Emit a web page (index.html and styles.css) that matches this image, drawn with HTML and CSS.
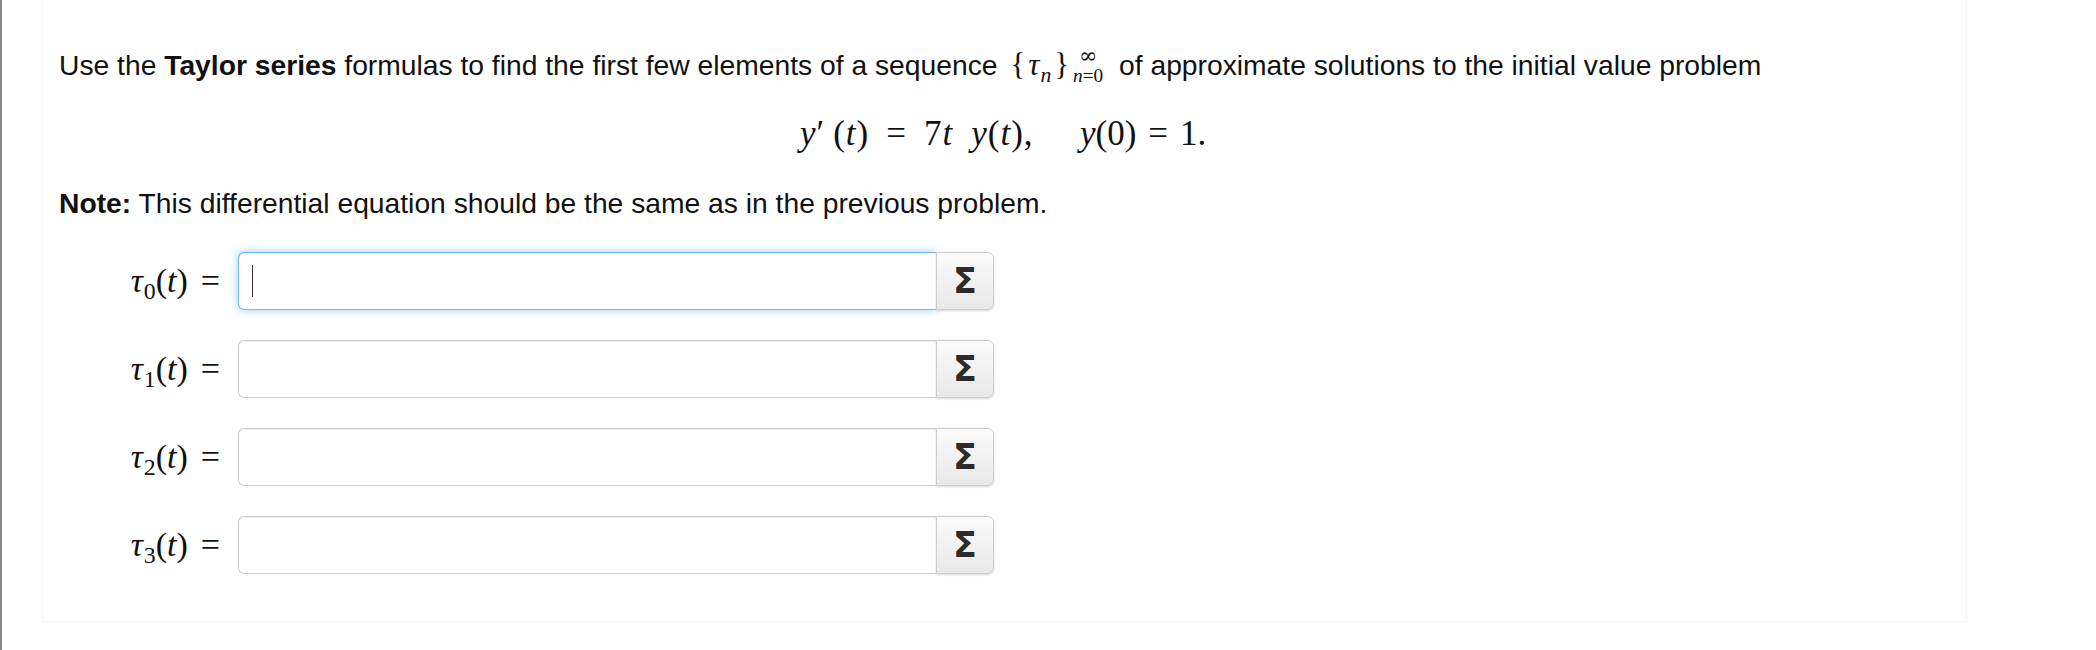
FILE: index.html
```html
<!DOCTYPE html>
<html>
<head>
<meta charset="utf-8">
<link rel="stylesheet" href="styles.css">
</head>
<body>
<div class="page">
  <div class="panel">
    <p class="intro">Use the <b>Taylor series</b> formulas to find the first few elements of a sequence <span class="m seq"><span class="brace">{</span><i class="tau">τ</i><i class="sub">n</i><span class="brace">}</span><span class="limits"><span class="sup">∞</span><span class="low"><i>n</i>=0</span></span></span> of approximate solutions to the initial value problem</p>
    <div class="equation">
      <span class="m first"><i>y</i><span class="prime">′</span><span class="gap">(<i>t</i>)</span><span class="eq">=</span>7<i>t</i><span class="gap2"><i>y</i>(<i>t</i>),</span></span>
      <span class="m second"><i>y</i>(0)<span class="eq">=</span>1.</span>
    </div>
    <p class="note"><b>Note:</b> This differential equation should be the same as in the previous problem.</p>
    <div class="rows">
      <div class="row">
        <label class="m lbl"><i class="tau">τ</i><span class="sub">0</span>(<i>t</i>)<span class="eq">=</span></label>
        <div class="field focused"><span class="caret"></span></div>
        <button class="sigma">Σ</button>
      </div>
      <div class="row">
        <label class="m lbl"><i class="tau">τ</i><span class="sub">1</span>(<i>t</i>)<span class="eq">=</span></label>
        <div class="field"></div>
        <button class="sigma">Σ</button>
      </div>
      <div class="row">
        <label class="m lbl"><i class="tau">τ</i><span class="sub">2</span>(<i>t</i>)<span class="eq">=</span></label>
        <div class="field"></div>
        <button class="sigma">Σ</button>
      </div>
      <div class="row">
        <label class="m lbl"><i class="tau">τ</i><span class="sub">3</span>(<i>t</i>)<span class="eq">=</span></label>
        <div class="field"></div>
        <button class="sigma">Σ</button>
      </div>
    </div>
  </div>
</div>
</body>
</html>
```
FILE: styles.css
```css
html, body {
  margin: 0;
  padding: 0;
  background: #fff;
}
body {
  font-family: "Liberation Sans", Arial, sans-serif;
  color: #111;
}
.page {
  display: flex;
  height: 650px;
  border-left: 2px solid #8a8a8a;
}
.panel {
  margin-left: 40px;
  width: 1925px;
  height: 622px;
  border-left: 1px solid #f6f6f6;
  border-right: 1px solid #f6f6f6;
  border-bottom: 1px solid #f6f6f6;
  box-sizing: border-box;
  padding-left: 16px;
  padding-top: 45px;
}
.intro, .note {
  margin: 0;
  font-size: 28.25px;
  line-height: 40px;
  height: 40px;
  white-space: nowrap;
}
.m {
  font-family: "Liberation Serif", "Times New Roman", serif;
  font-size: 34px;
}
.m i { font-style: italic; }
.seq { font-size: 31px; margin: 0 2px 0 2px; }
.brace { font-style: normal; margin: 0 3px; }
.tau { font-style: italic; }
.sub { font-size: 0.7em; position: relative; top: 0.3em; margin-left: 1px; }
.limits {
  display: inline-flex;
  flex-direction: column;
  align-items: center;
  vertical-align: middle;
  font-size: 0.62em;
  line-height: 1;
  position: relative;
  top: -2px;
  margin-left: 1px;
  margin-right: 6px;
}
.limits .sup { font-family: "DejaVu Serif", serif; font-size: 1.15em; line-height: 0.9; }
.equation {
  display: flex;
  margin-left: 741px;
  margin-top: 24px;
  height: 50px;
  align-items: center;
}
.equation .m { font-size: 35px; }
.equation .first { width: 280px; white-space: nowrap; letter-spacing: 1px; }
.equation .first .eq { margin: 0 17px; }
.equation .second .eq { margin: 0 12px; }
.prime { font-style: normal; }
.gap { margin-left: 8px; }
.gap2 { margin-left: 18px; }
.eq { margin: 0 13px; font-style: normal; }
.note {
  margin-top: 24px;
}
.rows {
  margin-top: 29px;
  display: flex;
  flex-direction: column;
  gap: 30px;
}
.row {
  display: flex;
  align-items: center;
  height: 58px;
}
.lbl {
  width: 179px;
  text-align: right;
  padding-right: 18px;
  box-sizing: border-box;
  white-space: nowrap;
}
.lbl .eq { margin-right: 0; }
.field {
  width: 698px;
  height: 58px;
  box-sizing: border-box;
  border: 1px solid #cccccc;
  border-right: none;
  border-radius: 6px 0 0 6px;
  background: #fff;
  box-shadow: inset 0 1px 1px rgba(0,0,0,0.075);
  display: flex;
  align-items: center;
  padding-left: 13px;
}
.field.focused {
  border-color: rgba(82,168,236,0.8);
  box-shadow: inset 0 1px 1px rgba(0,0,0,0.075), 0 0 10px rgba(82,168,236,0.55);
}
.caret {
  display: block;
  width: 1px;
  height: 32px;
  background: #333;
}
.sigma {
  width: 58px;
  height: 58px;
  box-sizing: border-box;
  border: 1px solid #cccccc;
  border-radius: 0 6px 6px 0;
  background: linear-gradient(#fbfbfb, #e8e8e8);
  box-shadow: 0 1px 2px rgba(0,0,0,0.15);
  font-family: "DejaVu Sans", sans-serif;
  font-weight: bold;
  font-size: 35px;
  line-height: 1;
  color: #2b2b2b;
  padding: 0;
}
```
